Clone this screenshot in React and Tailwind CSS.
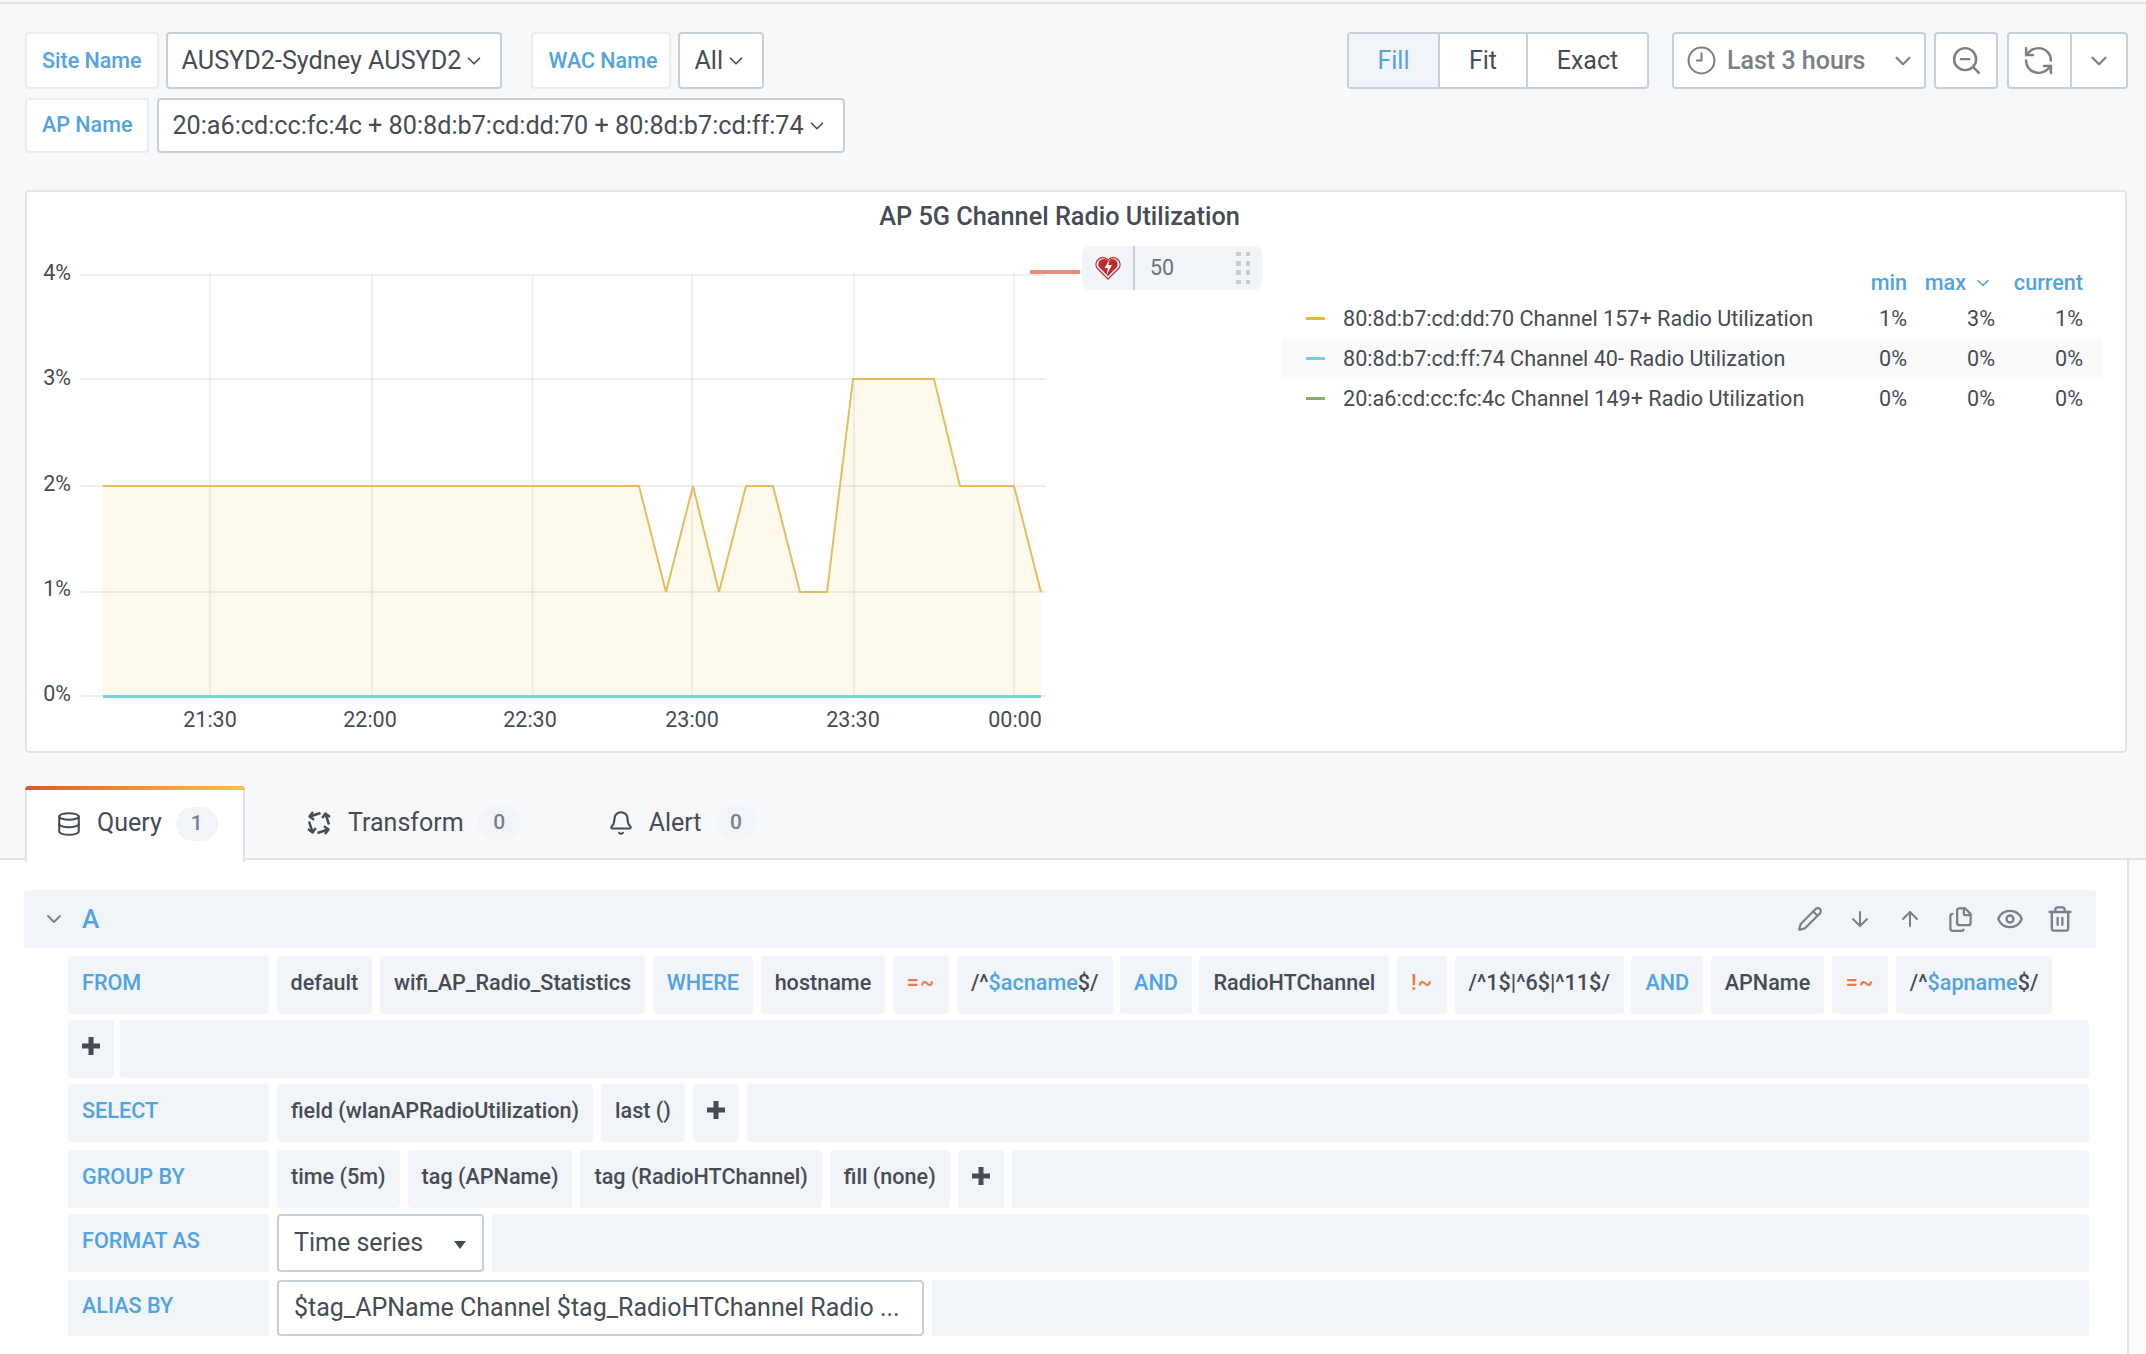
import React from "react";
import { ChevronDown, ZoomOut, RefreshCcw, Database, Bell, Pencil, ArrowDown, ArrowUp, Files, Eye, Trash2 } from "lucide-react";

const Label = ({ children, cls = "" }) => (
  <div className={`flex items-center h-full px-[15px] bg-white border-2 border-[#e9edf2] rounded-[4px] text-[#52a3e2] text-[21.5px] font-medium ${cls}`}>{children}</div>
);
const Sel = ({ children, cls = "" }) => (
  <div className={`flex items-center gap-[2px] h-full pr-[15px] bg-white border-2 border-[#c7d0d9] rounded-[4px] text-[#464c54] text-[25.2px] ${cls}`}>
    <span className="whitespace-nowrap">{children}</span>
    <ChevronDown className="w-[22px] h-[22px]" strokeWidth={1.8} />
  </div>
);
const Seg = ({ children, color = "text-[#464c54]", cls = "" }) => (
  <div className={`flex items-center h-full px-[14px] pb-[3px] bg-[#f1f4f9] rounded-[4px] whitespace-nowrap text-[21.6px] font-medium ${color} ${cls}`}>{children}</div>
);
const RowLabel = ({ children }) => (
  <div className="flex items-center h-full w-[201px] shrink-0 px-[14px] pb-[3px] bg-[#f1f4f9] rounded-[4px] text-[21.6px] font-medium text-[#52a3e2]">{children}</div>
);
const Fill = () => <div className="flex-1 h-full bg-[#f1f4f9] rounded-[4px]" />;
const Plus = () => (
  <Seg cls="w-[46px] shrink-0 justify-center px-0">
    <svg className="-mt-[3px]" width="18" height="18" viewBox="0 0 18 18"><path d="M6.5 0h5v6.5H18v5h-6.5V18h-5v-6.5H0v-5h6.5z" fill="#464c54" /></svg>
  </Seg>
);
const Blue = ({ children }) => <span className="text-[#52a3e2]">{children}</span>;
const BLUE = "text-[#52a3e2]";
const ORANGE = "text-[#f0784a] tracking-[1px]";

const TransformIcon = () => (
  <svg width="26" height="24" viewBox="0 0 26 24" fill="none" stroke="#464c54" strokeWidth="2.4" strokeLinejoin="round">
    {[0, -90, -180, -270].map(r => (
      <g key={r} transform={`rotate(${r} 13 12)`}>
        <path d="M14.5 2 4 5.5" />
        <path d="M7 1 3.5 5.6 8 8.8" />
      </g>
    ))}
  </svg>
);

const ClockIcon = () => (
  <svg className="block" width="31" height="31" viewBox="0 0 24 24" fill="none" stroke="currentColor" strokeWidth="1.6" strokeLinecap="round" strokeLinejoin="round">
    <circle cx="12" cy="12" r="10" />
    <path d="M12 6.5V12H8.5" />
  </svg>
);

const Heart = () => (
  <svg width="26" height="24" viewBox="0 0 26 24">
    <path d="M13 23 2 12C-2 5 7-2 13 4c6-6 15 1 11 8z" fill="none" stroke="#c4393b" strokeWidth="1.3" />
    <path d="M13 20 4 11C1 6 8 0 13 5c5-5 12 1 9 6z" fill="#b92c2f" />
    <path d="M15 3 9.5 12H13l-1.5 7 5.5-10h-3.8z" fill="#fff" />
  </svg>
);

const points = [[103,486],[639,486],[666,592],[693,486],[719,592],[746,486],[773,486],[800,592],[827,592],[853,379],[934,379],[960,486],[1014,486],[1041,592]];
const line = points.map(p => p.join(",")).join(" ");
const area = `103,696 ${line} 1041,696`;

const Chart = () => (
  <svg width="1255" height="520" viewBox="27 232 1255 520" className="block shrink-0" style={{ fontFamily: "Roboto, sans-serif" }}>
    {[275,379,486,592,696].map(y => <line key={y} x1="81" x2="1046" y1={y} y2={y} stroke="#eeeeef" strokeWidth="2" />)}
    <polygon points={area} fill="#e8c04a" fillOpacity="0.1" />
    {[210,372,532.5,692,854,1014].map(x => <line key={x} x1={x} x2={x} y1="275" y2="696" stroke="#464c54" strokeOpacity="0.08" strokeWidth="2" />)}
    <polyline points={line} fill="none" stroke="#e6bc5e" strokeWidth="2" />
    <line x1="103" x2="1041" y1="696.5" y2="696.5" stroke="#7fcfd6" strokeWidth="3" />
    <line x1="1030" x2="1080" y1="272" y2="272" stroke="#e98a7e" strokeWidth="4" />
    {[["4%",275],["3%",380],["2%",486],["1%",591],["0%",696]].map(([t,y]) => (
      <text key={t} x="71" y={y - 1} textAnchor="end" dominantBaseline="middle" fontSize="21.5" fill="#464c54">{t}</text>
    ))}
    {[["21:30",210],["22:00",370],["22:30",530],["23:00",692],["23:30",853],["00:00",1015]].map(([t,x]) => (
      <text key={t} x={x} y="727" textAnchor="middle" fontSize="21.5" fill="#464c54">{t}</text>
    ))}
  </svg>
);

const legend = [
  ["#eab839", "80:8d:b7:cd:dd:70 Channel 157+ Radio Utilization", "1%", "3%", "1%", ""],
  ["#6ed0e0", "80:8d:b7:cd:ff:74 Channel 40- Radio Utilization", "0%", "0%", "0%", "bg-[#fafafa]"],
  ["#7eb26d", "20:a6:cd:cc:fc:4c Channel 149+ Radio Utilization", "0%", "0%", "0%", ""],
];

const Badge = ({ children, cls = "" }) => (
  <span className={`h-[34px] flex items-center justify-center rounded-full bg-[#f1f4f9] text-[21px] text-[#7b8087] font-medium ${cls}`}>{children}</span>
);

export default function App() {
  return (
    <div className="min-h-[1354px] bg-[#f7f8fa] pt-[2px] overflow-hidden" style={{ fontFamily: "Roboto, sans-serif" }}>
      <div className="h-[2px] bg-[#dde0e6]" />

      <div className="flex justify-between pl-[25px] pr-[18px] pt-[28px] h-[186px]">
        <div className="flex flex-col gap-[9px]">
          <div className="flex h-[57px]">
            <Label cls="mr-[7px] pt-[1px]">Site Name</Label>
            <Sel cls="mr-[29px] pl-[14px] pt-[1px]">AUSYD2-Sydney AUSYD2</Sel>
            <Label cls="mr-[7px] pt-[1px] w-[140px] whitespace-nowrap">WAC Name</Label>
            <Sel cls="pl-[14px] pt-[1px]">All</Sel>
          </div>
          <div className="flex h-[55px]">
            <Label cls="mr-[8px]">AP Name</Label>
            <Sel cls="pl-[13px]">20:a6:cd:cc:fc:4c + 80:8d:b7:cd:dd:70 + 80:8d:b7:cd:ff:74</Sel>
          </div>
        </div>
        <div className="flex h-[57px] text-[25px]">
          <div className="flex mr-[23px] border-2 border-[#c7d0d9] rounded-[4px] bg-white text-[#464c54]">
            <div className="w-[91px] pt-[1px] flex items-center justify-center bg-[#f1f5f9] text-[#52a3e2] border-r-2 border-[#c7d0d9]">Fill</div>
            <div className="w-[88px] pt-[1px] flex items-center justify-center border-r-2 border-[#c7d0d9]">Fit</div>
            <div className="w-[119px] pt-[1px] flex items-center justify-center">Exact</div>
          </div>
          <div className="w-[254px] mr-[8px] flex items-center pl-[12px] pr-[8px] border-2 border-[#c7d0d9] rounded-[4px] bg-white text-[#7b8087] font-medium">
            <span className="mr-[10px]"><ClockIcon /></span>
            <span className="flex-1 pt-[1px]">Last 3 hours</span>
            <ChevronDown className="w-[26px] h-[26px]" strokeWidth={2} />
          </div>
          <div className="w-[64px] mr-[9px] flex items-center justify-center border-2 border-[#c7d0d9] rounded-[4px] bg-white text-[#7b8087]">
            <ZoomOut className="w-[33px] h-[33px]" strokeWidth={1.8} />
          </div>
          <div className="flex border-2 border-[#c7d0d9] rounded-[4px] bg-white text-[#7b8087]">
            <div className="w-[63px] pr-[3px] flex items-center justify-center border-r-2 border-[#c7d0d9]">
              <RefreshCcw className="w-[33px] h-[33px]" strokeWidth={1.8} />
            </div>
            <div className="w-[54px] flex items-center justify-center">
              <ChevronDown className="w-[26px] h-[26px]" strokeWidth={2} />
            </div>
          </div>
        </div>
      </div>

      <div className="relative flex ml-[25px] mr-[19px] h-[563px] bg-white border-2 border-[#e1e4ea] rounded-[4px]">
        <div className="absolute left-0 right-0 top-[10px] pr-[33px] text-center text-[25.3px] leading-[30px] font-medium text-[#464c54]">AP 5G Channel Radio Utilization</div>
        <div className="pt-[40px]"><Chart /></div>
        <div className="absolute left-[1055px] top-[54px] w-[180px] h-[44px] flex items-center bg-[#f1f4f9] rounded-[8px]">
          <div className="w-[51px] flex justify-center"><Heart /></div>
          <div className="w-[2px] h-[44px] bg-[#c7d0d9]" />
          <div className="ml-[15px] flex-1 text-[21.5px] text-[#6e7176]">50</div>
          <div className="grid grid-cols-2 gap-x-[5px] gap-y-[4.7px] mr-[12px]">
            {[0,1,2,3,4,5,6,7].map(i => <div key={i} className="w-[4.5px] h-[4.7px] bg-[#cccccc]" />)}
          </div>
        </div>
        <div className="w-[820px] pt-[75px] text-[21.6px] text-[#464c54]">
          <div className="grid grid-cols-[1fr_88px_88px_88px] items-center h-[32px] pr-[19px] text-right font-medium text-[#52a3e2]">
            <div />
            <div>min</div>
            <div className="flex items-center justify-end gap-[7px] pr-[2px]">max<ChevronDown className="w-[20px] h-[20px]" strokeWidth={2} /></div>
            <div>current</div>
          </div>
          {legend.map(([c, t, a, b, d, bg]) => (
            <div key={t} className={`grid grid-cols-[1fr_88px_88px_88px] items-center h-[40px] pl-[24px] pr-[19px] ${bg}`}>
              <div className="flex items-center gap-[18px]"><span className="w-[19px] h-[3px]" style={{ backgroundColor: c }} /><span>{t}</span></div>
              <div className="text-right">{a}</div>
              <div className="text-right">{b}</div>
              <div className="text-right">{d}</div>
            </div>
          ))}
        </div>
      </div>

      <div className="relative h-[107px] pt-[33px] pl-[25px] border-b-2 border-[#dfe2e7] text-[25px] text-[#464c54]">
        <div className="flex h-[74px]">
          <div className="relative w-[220px] -mb-[2px] h-[76px] bg-white border-x-2 border-[#dfe2e7] rounded-t-[4px] flex items-center pl-[29px]">
            <div className="absolute -left-[2px] -right-[2px] top-0 h-[4px] rounded-t-[4px] bg-gradient-to-r from-[#e0562f] to-[#f6c540]" />
            <Database className="w-[26px] h-[26px] mr-[15px]" strokeWidth={1.9} />
            <span className="pb-[2px]">Query</span>
            <Badge cls="ml-[14px] w-[42px]">1</Badge>
          </div>
          <div className="flex items-center ml-[61px]">
            <TransformIcon />
            <span className="ml-[16px]">Transform</span>
            <Badge cls="ml-[14px] w-[43px]">0</Badge>
          </div>
          <div className="flex items-center ml-[87px]">
            <Bell className="w-[26px] h-[26px]" strokeWidth={1.9} />
            <span className="ml-[15px]">Alert</span>
            <Badge cls="ml-[14px] w-[41px]">0</Badge>
          </div>
        </div>
      </div>

      <div className="bg-[#fcfcfc]">
        <div className="h-[494px] mr-[17px] bg-white border-r-2 border-[#e1e4ea] pt-[30px] pl-[24px]">
          <div className="flex items-center w-[2072px] h-[58px] bg-[#f1f4f9] rounded-[4px] pl-[18px] pr-[11px]">
            <ChevronDown className="w-[24px] h-[24px] text-[#7b8087]" strokeWidth={1.8} />
            <span className="ml-[16px] flex-1 text-[26px] font-medium text-[#52a3e2]">A</span>
            <div className="flex items-center text-[#7b8087]">
              {[
                [Pencil, "w-[26px] h-[26px]"],
                [ArrowDown, "w-[24px] h-[24px]"],
                [ArrowUp, "w-[24px] h-[24px]"],
                [Files, "w-[27px] h-[27px]"],
                [Eye, "w-[28px] h-[28px]"],
                [Trash2, "w-[28px] h-[28px]"],
              ].map(([I, c], i) => (
                <div key={i} className="w-[50px] flex justify-center"><I className={c} strokeWidth={2} /></div>
              ))}
            </div>
          </div>

          <div className="ml-[44px] w-[2021px] mt-[8px] flex flex-col">
            <div className="flex gap-[7.6px] h-[58px]">
              <RowLabel>FROM</RowLabel>
              <Seg>default</Seg>
              <Seg>wifi_AP_Radio_Statistics</Seg>
              <Seg color={BLUE}>WHERE</Seg>
              <Seg>hostname</Seg>
              <Seg color={ORANGE}>=~</Seg>
              <Seg><span>/^<Blue>$acname</Blue>$/</span></Seg>
              <Seg color={BLUE}>AND</Seg>
              <Seg>RadioHTChannel</Seg>
              <Seg color={ORANGE}>!~</Seg>
              <Seg>/^1$|^6$|^11$/</Seg>
              <Seg color={BLUE}>AND</Seg>
              <Seg>APName</Seg>
              <Seg color={ORANGE}>=~</Seg>
              <Seg><span>/^<Blue>$apname</Blue>$/</span></Seg>
            </div>
            <div className="flex gap-[6px] h-[58px] mt-[6px]">
              <Plus />
              <Fill />
            </div>
            <div className="flex gap-[8px] h-[58px] mt-[6px]">
              <RowLabel>SELECT</RowLabel>
              <Seg>field (wlanAPRadioUtilization)</Seg>
              <Seg>last ()</Seg>
              <Plus />
              <Fill />
            </div>
            <div className="flex gap-[8px] h-[58px] mt-[8px]">
              <RowLabel>GROUP BY</RowLabel>
              <Seg>time (5m)</Seg>
              <Seg>tag (APName)</Seg>
              <Seg>tag (RadioHTChannel)</Seg>
              <Seg>fill (none)</Seg>
              <Plus />
              <Fill />
            </div>
            <div className="flex gap-[8px] h-[58px] mt-[6px]">
              <RowLabel>FORMAT AS</RowLabel>
              <div className="w-[207px] h-full flex items-center justify-between pl-[15px] pr-[16px] bg-white border-2 border-[#c7d0d9] rounded-[4px] text-[25px] text-[#464c54]">
                <span className="pb-[1px]">Time series</span>
                <span className="mt-[4px] border-x-[6px] border-t-[8px] border-x-transparent border-t-[#464c54]" />
              </div>
              <Fill />
            </div>
            <div className="flex gap-[8px] h-[56px] mt-[8px]">
              <RowLabel>ALIAS BY</RowLabel>
              <div className="w-[647px] h-full flex items-center pl-[15px] bg-white border-2 border-[#c7d0d9] rounded-[4px] text-[25px] text-[#464c54]">
                <span className="whitespace-nowrap">$tag_APName Channel $tag_RadioHTChannel Radio ...</span>
              </div>
              <Fill />
            </div>
          </div>
        </div>
      </div>
    </div>
  );
}
